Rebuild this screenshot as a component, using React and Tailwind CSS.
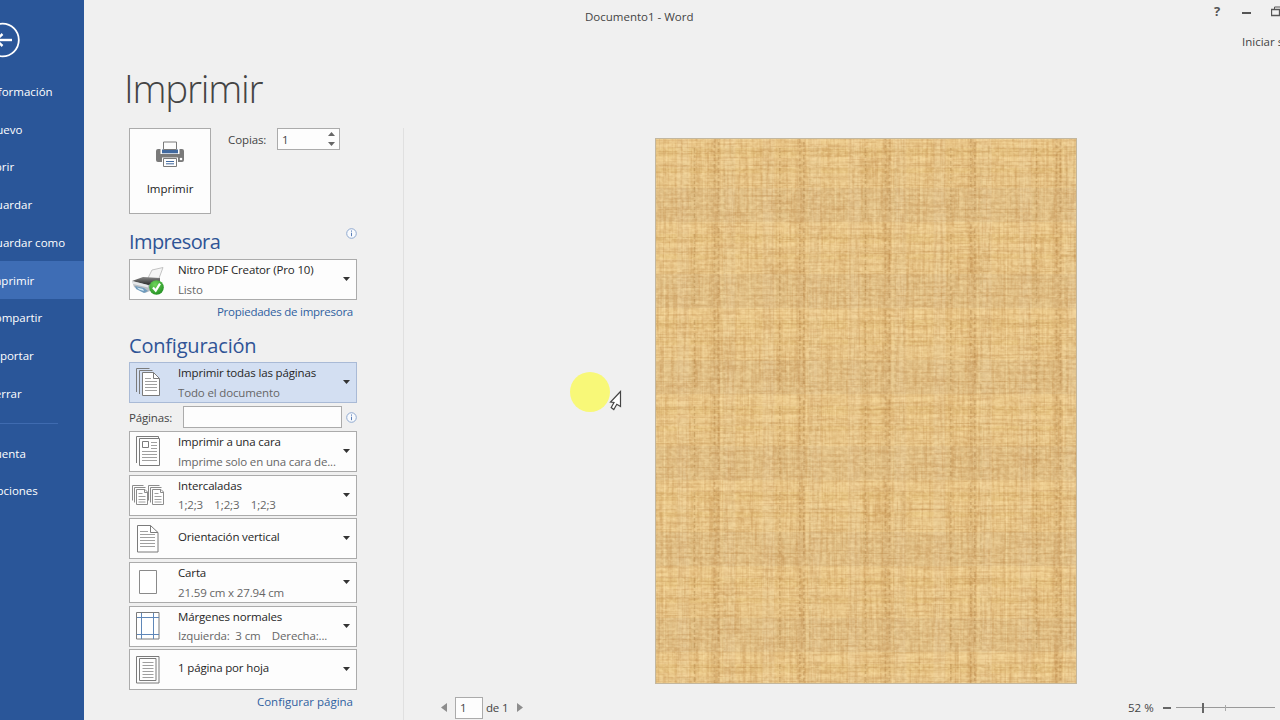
import React from 'react';
import clsx from 'clsx';

const NAV_TOP = [
  'Información',
  'Nuevo',
  'Abrir',
  'Guardar',
  'Guardar como',
  'Imprimir',
  'Compartir',
  'Exportar',
  'Cerrar',
];
const NAV_BOTTOM = ['Cuenta', 'Opciones'];

function NavItem({ label, active }) {
  return (
    <div className={clsx('flex h-[37.75px] items-center pt-px', active && 'bg-[#3e6db5]')}>
      <span className="-ml-[12.500px] whitespace-nowrap text-[11.500px] font-medium text-white">{label}</span>
    </div>
  );
}

function Sidebar() {
  return (
    <nav className="h-full w-[84px] shrink-0 overflow-hidden bg-[#2a5699]">
      <svg className="mt-[22px] -ml-[16px] h-9 w-9" viewBox="0 0 36 36" fill="none" stroke="#fff">
        <circle cx="18.5" cy="18" r="16.3" strokeWidth="1.8" />
        <path d="M28 18H11" strokeWidth="2.4" />
        <path d="M18.5 12l-6.500 6 6.500 6" strokeWidth="2.400" />
      </svg>
      <div className="mt-[14px]">
        {NAV_TOP.map((label) => (
          <NavItem key={label} label={label} active={label === 'Imprimir'} />
        ))}
      </div>
      <div className="mt-[11px] mb-[10px] h-px w-[58px] bg-[#3f6bb0]" />
      {NAV_BOTTOM.map((label) => (
        <NavItem key={label} label={label} />
      ))}
    </nav>
  );
}

function InfoIcon() {
  return (
    <svg className="h-[11px] w-[11px]" viewBox="0 0 11 11" fill="none">
      <circle cx="5.500" cy="5.500" r="4.800" stroke="#8fa9d0" fill="#f8fafd" />
      <path d="M5.500 4.700v3.500M5.500 2.500v1.200" stroke="#5a7fb8" />
    </svg>
  );
}

function PrintIcon() {
  return (
    <svg className="h-[26px] w-[28px]" viewBox="0 0 28 26">
      <path d="M2 8h2.500v5h19V8H26a2 2 0 0 1 2 2v9a2 2 0 0 1-2 2H2a2 2 0 0 1-2-2v-9a2 2 0 0 1 2-2z" fill="#7a7a7a" />
      <path d="M6 8.500h16v3.800H6z" fill="#41699f" />
      <path d="M7.500 1h13v7.500h-13z" fill="#fdfdfd" stroke="#7a7a7a" />
      <path d="M6 16.500h16V22H6z" fill="#fdfdfd" />
      <path d="M7.500 17.500h13v8h-13z" fill="#fdfdfd" stroke="#7a7a7a" />
      <path d="M10 20.500h8M10 22.800h8" stroke="#41699f" />
      <circle cx="25" cy="18" r="1.300" fill="#fff" />
    </svg>
  );
}

function PrinterDeviceIcon() {
  return (
    <svg className="mt-1 h-[30px] w-[34px]" viewBox="0 0 34 30">
      <defs>
        <linearGradient id="lid" x1="0" y1="0" x2="0" y2="1">
          <stop offset="0" stopColor="#888" />
          <stop offset="1" stopColor="#2a2a2a" />
        </linearGradient>
        <radialGradient id="ok" cx=".4" cy=".3" r=".8">
          <stop offset="0" stopColor="#6fd45a" />
          <stop offset="1" stopColor="#1b8a1d" />
        </radialGradient>
      </defs>
      <path d="M17 12l4-8 11-2.500L27 15z" fill="#f6f6f6" stroke="#b5b5b5" strokeWidth=".8" />
      <path d="M1 15l2 6 11 6 15-6v-8z" fill="#b9bdc2" />
      <path d="M1 15l11-4 17 1v4l-12 3z" fill="url(#lid)" />
      <path d="M1 15l16 4v2.500L2 18z" fill="#e5e7e9" />
      <path d="M4 20l9 2 4 3-4 2-8-4z" fill="#6f9bbd" />
      <path d="M6 21.500l6 1.500 1 2-5-1.500z" fill="#d5eaf6" />
      <circle cx="25.500" cy="21.500" r="7.300" fill="url(#ok)" />
      <path d="M22 21.500l2.700 3.200 4.300-7" fill="none" stroke="#fff" strokeWidth="2.200" />
    </svg>
  );
}

function AllPagesIcon() {
  return (
    <svg className="h-[30px] w-[26px]" viewBox="0 0 26 30" fill="none" stroke="#7b7b7b">
      <path d="M1.500 25V1.500h13M4.500 27V3.500h13" />
      <path d="M7.500 5.500h11l6 6v17h-17z" fill="#fff" />
      <path d="M18.500 5.500v6h6" />
      <path d="M10 11.500h6M10 14.500h12M10 17.500h12M10 20.500h12M10 23.500h12" stroke="#a0a0a0" />
    </svg>
  );
}

function OneSidedIcon() {
  return (
    <svg className="h-[32px] w-[26px]" viewBox="0 0 26 32" fill="none" stroke="#7b7b7b">
      <path d="M1.500 28V1.500h22V3" />
      <path d="M4.500 3.500h20v27h-20z" fill="#fff" />
      <path d="M7.500 6.500h6v6h-6z" />
      <path d="M16 7.500h6M16 10.500h6M16 13.500h6M7 16.500h15M7 19.500h15M7 22.500h15M7 25.500h15" stroke="#a0a0a0" />
    </svg>
  );
}

function CollatedIcon() {
  return (
    <svg className="h-[22px] w-[33px]" viewBox="0 0 33 22" fill="none" stroke="#8c8c8c">
      {[0, 16].map((x) => (
        <g key={x} transform={`translate(${x} 0)`}>
          <path d="M.5 16.500V1.500h11M2.500 18.500V3.500h11" />
          <path d="M4.500 5.500h8.500l2.500 2.500V20.500H4.500z" fill="#fff" />
          <path d="M12.500 5.500v3h3" />
          <path d="M6.500 9.500h4M6.500 12.500h7M6.500 15.500h7M6.500 18h7" stroke="#a0a0a0" />
        </g>
      ))}
    </svg>
  );
}

function PortraitIcon() {
  return (
    <svg className="h-[29px] w-[22px]" viewBox="0 0 22 29" fill="none" stroke="#7b7b7b">
      <path d="M.5 1.500h13l7.500 7v19.500H.5z" fill="#fff" />
      <path d="M13.500 1.500v7h7.500" />
      <path d="M3 7.500h8M3 10.500h15M3 13.500h15M3 16.500h15M3 19.500h15M3 22.500h15" stroke="#a0a0a0" />
    </svg>
  );
}

function LetterIcon() {
  return (
    <svg className="h-[24px] w-[18px]" viewBox="0 0 18 24">
      <path d="M.5.500h17v23H.5z" fill="#fff" stroke="#8a8a8a" />
    </svg>
  );
}

function MarginsIcon() {
  return (
    <svg className="h-[29px] w-[24px]" viewBox="0 0 24 29" fill="none">
      <path d="M.5 1.500h22.500v26.500H.5z" fill="#fff" stroke="#7b7b7b" />
      <path d="M5.500 2v26M17.500 2v26M1 6.500h22M1 23.500h22" stroke="#5f87b8" />
    </svg>
  );
}

function PerSheetIcon() {
  return (
    <svg className="h-[29px] w-[24px]" viewBox="0 0 24 29" fill="none" stroke="#7b7b7b">
      <path d="M.5 1.500h22.500v26.500H.5z" />
      <path d="M3.500 3.500h16.500v22H3.500z" fill="#fff" />
      <path d="M6.500 7.500h11M6.500 10.500h11M6.500 13.500h11M6.500 16.500h11M6.500 19.500h11M6.500 22.500h11" stroke="#a0a0a0" />
    </svg>
  );
}

function Combo({ icon, title, detail, active }) {
  return (
    <button
      className={clsx(
        'flex h-[41px] w-[228px] shrink-0 items-center border text-left text-[11.500px] tracking-[-0.150px]',
        active ? 'border-[#a9bad6] bg-[#d3dff2]' : 'border-[#ababab] bg-[#fdfdfd]'
      )}
    >
      <span className="flex w-[36px] justify-center pb-px">{icon}</span>
      <span className={clsx('ml-3 w-[165px] overflow-hidden whitespace-pre leading-[19.500px]', !detail && 'pb-1')}>
        <span className="block text-[#262626]">{title}</span>
        {detail && <span className="block text-[#666]">{detail}</span>}
      </span>
      <svg className="mb-px h-1 w-[7px]" viewBox="0 0 7 4">
        <path d="M0 0h7L3.500 4z" fill="#333" />
      </svg>
    </button>
  );
}

function Settings() {
  return (
    <section className="flex h-full w-[320px] shrink-0 flex-col border-r border-[#e0e0e0] pl-[45px] text-[11.500px] text-[#444]">
      <div className="flex h-[86px] shrink-0">
        <button className="flex h-[86px] w-[82px] flex-col items-center border border-[#ababab] bg-[#fdfdfd] pt-3">
          <PrintIcon />
          <span className="mt-[13px] font-medium leading-[18px] text-[#222]">Imprimir</span>
        </button>
        <span className="mt-[3px] ml-[17px] w-[49px] leading-[18px] tracking-[-0.100px]">Copias:</span>
        <div className="flex h-[22px] w-[63px] items-center justify-between border border-[#ababab] bg-[#fdfdfd] pr-1 pl-[4px]">
          <span className="pt-px">1</span>
          <svg className="h-[14px] w-[7px]" viewBox="0 0 7 14" fill="#666">
            <path d="M0 4h7L3.500 0zM0 10h7l-3.500 4z" />
          </svg>
        </div>
      </div>

      <div className="mt-[14px] flex h-[31px] w-[228px] shrink-0 justify-between">
        <h2 className="text-[20px] leading-[28px] tracking-[-0.600px] text-[#2f5496]">Impresora</h2>
        <span><InfoIcon /></span>
      </div>
      <Combo icon={<PrinterDeviceIcon />} title="Nitro PDF Creator (Pro 10)" detail="Listo" />
      <a className="mt-[3px] w-[224px] text-right leading-[18px] tracking-[-0.250px] text-[#2f5f9f]">
        Propiedades de impresora
      </a>

      <h2 className="mt-[10px] h-[31px] text-[20px] leading-[29px] tracking-[-0.200px] text-[#2f5496]">Configuración</h2>
      <Combo
        active
        icon={<AllPagesIcon />}
        title="Imprimir todas las páginas"
        detail="Todo el documento"
      />
      <div className="my-[3px] flex h-[22px] w-[228px] shrink-0 items-center">
        <span className="w-[54px] pt-px tracking-[-0.150px]">Páginas:</span>
        <div className="h-[22px] w-[159px] border border-[#ababab] bg-[#fdfdfd]" />
        <span className="ml-auto"><InfoIcon /></span>
      </div>
      <div className="flex flex-col gap-[2.700px]">
        <Combo icon={<OneSidedIcon />} title="Imprimir a una cara" detail="Imprime solo en una cara de..." />
        <Combo icon={<CollatedIcon />} title="Intercaladas" detail="1;2;3    1;2;3    1;2;3" />
        <Combo icon={<PortraitIcon />} title="Orientación vertical" />
        <Combo icon={<LetterIcon />} title="Carta" detail="21.59 cm x 27.94 cm" />
        <Combo icon={<MarginsIcon />} title="Márgenes normales" detail="Izquierda:  3 cm    Derecha:..." />
        <Combo icon={<PerSheetIcon />} title="1 página por hoja" />
      </div>
      <a className="mt-[3px] w-[224px] text-right leading-[18px] text-[#2f5f9f]">Configurar página</a>
    </section>
  );
}

// Woven papyrus sheet: a repeating 85.5px tile under fine thread noise.
function Papyrus() {
  return (
    <svg className="h-[546px] w-[422px]" viewBox="0 0 422 546">
      <defs>
        <filter id="warp" x="0" y="0" width="100%" height="100%" colorInterpolationFilters="sRGB">
          <feTurbulence type="fractalNoise" baseFrequency="0.35 0.020" numOctaves="3" seed="4" />
          <feColorMatrix values="0 0 0 0 .74  0 0 0 0 .52  0 0 0 0 .26  .85 0 0 0 -.34" />
        </filter>
        <filter id="weft" x="0" y="0" width="100%" height="100%" colorInterpolationFilters="sRGB">
          <feTurbulence type="fractalNoise" baseFrequency="0.020 0.420" numOctaves="3" seed="9" />
          <feColorMatrix values="0 0 0 0 .74  0 0 0 0 .53  0 0 0 0 .28  .85 0 0 0 -.34" />
        </filter>
        <filter id="shine" x="0" y="0" width="100%" height="100%" colorInterpolationFilters="sRGB">
          <feTurbulence type="fractalNoise" baseFrequency="0.220 0.300" numOctaves="2" seed="21" />
          <feColorMatrix values="0 0 0 0 1  0 0 0 0 .9  0 0 0 0 .68  1 0 0 0 -.4" />
        </filter>
        <pattern id="tile" width="85.500" height="86" patternUnits="userSpaceOnUse">
          <path d="M0 50h85.500v34H0z" fill="#c0a27c" opacity=".22" />
          <path d="M0 10h85.500v9H0zM0 30h85.500v5H0z" fill="#d9a850" opacity=".14" />
          <path d="M0 18h85.500v5H0zM0 0h85.500v8H0z" fill="#ffe3a0" opacity=".2" />
          <path d="M56 0h9v86h-9z" fill="#b98543" opacity=".16" />
          <path d="M36 0h7v86h-7z" fill="#b98543" opacity=".08" />
          <path d="M22 0h12v86H22zM68 0h12v86H68z" fill="#ead9ae" opacity=".2" />
          <path d="M59.500 0v52M63.500 4v72M39.500 10v70" stroke="#94642a" strokeDasharray="5 2 3 3" opacity=".45" />
          <path d="M69.500 30v52M77.500 8v30" stroke="#a87936" strokeDasharray="8 3" opacity=".3" />
          <path d="M66.500 0v86M48.500 0v86M9.500 0v86" stroke="#ffe9b2" opacity=".35" />
          <path d="M0 13.500h85.500M0 27.500h85.500M0 47.500h85.500M0 71.500h85.500" stroke="#b98543" strokeDasharray="22 6 9 5" opacity=".22" />
        </pattern>
      </defs>
      <rect width="422" height="546" fill="#eac98c" />
      <rect width="422" height="546" fill="url(#tile)" />
      <rect width="422" height="546" filter="url(#warp)" />
      <rect width="422" height="546" filter="url(#weft)" />
      <rect width="422" height="546" filter="url(#shine)" />
      <rect x=".5" y=".5" width="421" height="545" fill="none" stroke="#c3b79e" />
    </svg>
  );
}

function Preview() {
  return (
    <section className="flex min-w-0 flex-1 flex-col">
      <div className="relative mt-[10px] ml-[251px] h-[546px] w-[422px]">
        <Papyrus />
        {/* pointer with its click highlight */}
        <div className="absolute top-[234px] -left-[85px] h-10 w-10 rounded-full bg-[#f8f878]" />
        <svg className="absolute top-[252px] -left-[46px] h-[22px] w-[14px]" viewBox="0 0 14 22">
          <path d="M11.500 1.500L1.500 12l3.500.5-2.800 5 2.600 2 3-5.200 3.700 2.200z" fill="#fff" stroke="#444" strokeWidth="1.200" />
        </svg>
      </div>
      <footer className="mt-[12px] flex h-[23px] items-center pl-[37px] text-[11.500px] text-[#444]">
        <svg className="h-[9px] w-[6px]" viewBox="0 0 6 9"><path d="M6 0v9L0 4.500z" fill="#8d8d8d" /></svg>
        <div className="ml-2 flex h-[22px] w-[28px] items-center border border-[#ababab] bg-[#fdfdfd] pl-[4px]">1</div>
        <span className="ml-[3px] w-[31px] whitespace-nowrap tracking-[-0.200px]">de 1</span>
        <svg className="h-[9px] w-[6px]" viewBox="0 0 6 9"><path d="M0 0v9l6-4.500z" fill="#8d8d8d" /></svg>
        <span className="ml-[605px] w-[35px] whitespace-nowrap">52 %</span>
        <div className="h-[2px] w-2 bg-[#666]" />
        <div className="ml-[5px] flex w-[99px] items-center">
          <div className="h-px w-[26px] bg-[#999]" />
          <div className="h-[10px] w-[2px] bg-[#666]" />
          <div className="h-px w-[21px] bg-[#999]" />
          <div className="h-[6px] w-px bg-[#aaa]" />
          <div className="h-px flex-1 bg-[#999]" />
        </div>
      </footer>
    </section>
  );
}

function Header() {
  return (
    <header className="h-[128px] text-[11.500px] text-[#444]">
      <div className="flex h-[32px] whitespace-nowrap">
        <span className="ml-[501px] w-[629px] shrink-0 pt-2 leading-[18px]">Documento1 - Word</span>
        <span className="w-[28px] shrink-0 pt-[2px] text-[13px] font-bold leading-[18px] text-[#555]">?</span>
        <div className="mt-3 h-[2px] w-[9px] shrink-0 bg-[#555]" />
        <svg className="mt-[6px] ml-[20px] h-[11px] w-[12px] shrink-0" viewBox="0 0 12 11" fill="none" stroke="#555">
          <path d="M3.500 3V1h8v6.500H9" />
          <path d="M.5 3.500h8v6h-8z" strokeWidth="1.300" />
        </svg>
      </div>
      <div className="ml-[1158px] h-5 whitespace-nowrap leading-[20px]">Iniciar sesión</div>
      <h1 className="ml-[40px] text-[38.500px] font-light leading-[73px] tracking-[-1.200px] text-[#444]">Imprimir</h1>
    </header>
  );
}

export default function App() {
  return (
    <div className="flex h-[720px] w-[1280px] overflow-hidden bg-[#f0f0f0] font-['Open_Sans','Noto_Sans',sans-serif]">
      <Sidebar />
      <main className="min-w-0 flex-1 overflow-hidden">
        <Header />
        <div className="flex h-[592px]">
          <Settings />
          <Preview />
        </div>
      </main>
    </div>
  );
}
